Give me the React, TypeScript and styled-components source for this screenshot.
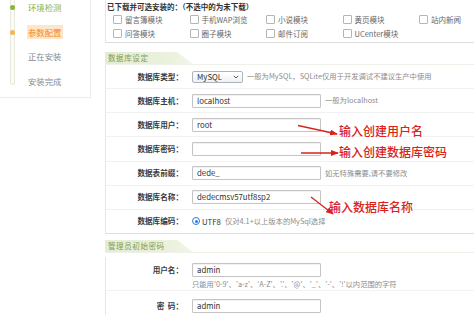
import React from 'react'
import styled, { createGlobalStyle } from 'styled-components'

const GlobalStyle = createGlobalStyle`
  html, body {
    margin: 0;
    padding: 0;
    background: #fff;
  }
  body {
    font-family: 'Noto Sans CJK SC', 'Noto Sans', sans-serif;
    color: #333;
  }
`

const Page = styled.div`
  position: relative;
  display: flex;
  align-items: flex-start;
  width: 474px;
  height: 315px;
  overflow: hidden;
`

const Sidebar = styled.div`
  position: relative;
  flex: 0 0 91px;
  height: 98px;
  border-right: 1px solid #ececec;
  border-bottom: 1px solid #ececec;
  box-sizing: border-box;
`

const Track = styled.div`
  position: absolute;
  left: 10px;
  top: 0;
  width: 3px;
  height: 84px;
  border: 1px solid #e6ebdd;
  border-top: none;
  border-radius: 0 0 3px 3px;
  background: #fbfcf8;
`

const Steps = styled.ul`
  list-style: none;
  margin: -5px 0 0;
  padding: 0;
`

const Step = styled.li<{ $state: 'done' | 'active' | 'todo' }>`
  position: relative;
  height: 24.5px;
  line-height: 24.5px;
  padding-left: 27px;
  font-size: 8.4px;
  color: ${(p) => (p.$state === 'done' ? '#8db33f' : p.$state === 'active' ? '#f28b1e' : '#8a8a8a')};

  span {
    padding: 1px 1px;
    background: ${(p) => (p.$state === 'active' ? '#fde6c9' : 'transparent')};
  }

  &::before {
    content: '';
    display: ${(p) => (p.$state === 'todo' ? 'none' : 'block')};
    position: absolute;
    left: 10px;
    top: 10px;
    width: 5px;
    height: 5px;
    border-radius: 50%;
    background: ${(p) => (p.$state === 'done' ? '#8db33f' : '#f6b552')};
  }
`

const Main = styled.div`
  flex: 0 0 390px;
  margin-left: 14px;
`

const TopBox = styled.div`
  height: 43px;
  box-sizing: border-box;
  border-left: 1px solid #e6e6e6;
  border-bottom: 1px solid #dedede;
`

const TopTitle = styled.div`
  height: 12px;
  line-height: 13px;
  padding-left: 1px;
  font-size: 7.5px;
  font-weight: 700;
  color: #333;
`

const ModuleGrid = styled.div`
  display: grid;
  grid-template-columns: repeat(5, 76.5px);
  grid-auto-rows: 14px;
  padding: 0 0 0 7px;
`

const Module = styled.label`
  display: flex;
  align-items: center;
  font-size: 7.5px;
  color: #666;
  white-space: nowrap;
`

const Box = styled.span`
  width: 7px;
  height: 7px;
  margin-right: 3px;
  border: 1px solid #b5b5b5;
  border-radius: 1px;
  background: #fff;
`

const SectionHead = styled.div<{ $top: number }>`
  margin-top: ${(p) => p.$top}px;
  height: 12px;
  border-bottom: 1px solid #eef1e8;
`

const Tab = styled.div`
  width: 88px;
  height: 12px;
  line-height: 12px;
  padding-left: 3px;
  box-sizing: border-box;
  font-size: 7.5px;
  letter-spacing: 0.6px;
  color: #7f9a55;
  background: linear-gradient(90deg, #e4edd2 0%, #eaf1dc 70%, #f1f5e8 100%);
  clip-path: polygon(0 0, 82% 0, 100% 100%, 0 100%);
`

const FormBox = styled.div<{ $gap: number }>`
  margin-top: ${(p) => p.$gap}px;
  border-left: 1px solid #e6e6e6;
  border-bottom: 1px solid #dedede;
`

const Row = styled.div<{ $h: number; $pad?: number; $last?: boolean }>`
  display: grid;
  grid-template-columns: 77px 1fr;
  column-gap: 9px;
  align-items: ${(p) => (p.$pad === undefined ? 'center' : 'start')};
  height: ${(p) => p.$h}px;
  padding-top: ${(p) => p.$pad ?? 0}px;
  box-sizing: border-box;
  border-bottom: ${(p) => (p.$last ? 'none' : '1px solid #f2f2f2')};
`

const Label = styled.div`
  height: 14px;
  line-height: 14px;
  text-align: right;
  font-size: 7.6px;
  font-weight: 700;
  color: #3a3a3a;
  white-space: pre;
`

const Field = styled.div`
  display: flex;
  align-items: center;
`

const Stack = styled.div`
  display: flex;
  flex-direction: column;
  gap: 2px;
`

const Input = styled.div`
  width: 129px;
  height: 14px;
  box-sizing: border-box;
  padding-left: 4px;
  line-height: 12px;
  font-size: 7.8px;
  color: #333;
  border: 1px solid #c4c4c4;
  border-radius: 1px;
  box-shadow: inset 0 1px 1px rgba(0, 0, 0, 0.06);
  background: #fff;
`

const Select = styled.div`
  display: flex;
  align-items: center;
  justify-content: space-between;
  width: 51px;
  height: 12px;
  box-sizing: border-box;
  padding: 0 3px 0 4px;
  font-size: 7.8px;
  color: #333;
  border: 1px solid #aeb4bf;
  border-radius: 2px;
  background: linear-gradient(#fff, #eef0f3);
`

const Hint = styled.span<{ $below?: boolean }>`
  margin-left: ${(p) => (p.$below ? 0 : 4)}px;
  font-size: 7.3px;
  line-height: 11px;
  color: #8c8c8c;
  white-space: nowrap;
`

const Radio = styled.span`
  width: 8px;
  height: 8px;
  box-sizing: border-box;
  border: 1.5px solid #2b7bd6;
  border-radius: 50%;
  margin-right: 2px;
  display: flex;
  align-items: center;
  justify-content: center;

  &::after {
    content: '';
    width: 3px;
    height: 3px;
    border-radius: 50%;
    background: #2b7bd6;
  }
`

const Strong = styled.span`
  font-size: 7.8px;
  color: #333;
`

const Note = styled.div<{ $x: number; $y: number }>`
  position: absolute;
  left: ${(p) => p.$x}px;
  top: ${(p) => p.$y}px;
  font-size: 12px;
  line-height: 14px;
  font-weight: 500;
  color: #d8231b;
  white-space: nowrap;
`

const Arrows = styled.svg`
  position: absolute;
  left: 0;
  top: 0;
  pointer-events: none;
`

const modules = ['留言簿模块', '手机WAP浏览', '小说模块', '黄页模块', '站内新闻', '问答模块', '圈子模块', '邮件订阅', 'UCenter模块']

const dbRows = [
  { label: '数据库主机：', value: 'localhost', hint: '一般为localhost' },
  { label: '数据库用户：', value: 'root' },
  { label: '数据库密码：', value: '' },
  { label: '数据表前缀：', value: 'dede_', hint: '如无特殊需要,请不要修改' },
  { label: '数据库名称：', value: 'dedecmsv57utf8sp2' },
]

export default function App() {
  return (
    <Page>
      <GlobalStyle />
      <Sidebar>
        <Track />
        <Steps>
          <Step $state="done"><span>环境检测</span></Step>
          <Step $state="active"><span>参数配置</span></Step>
          <Step $state="todo"><span>正在安装</span></Step>
          <Step $state="todo"><span>安装完成</span></Step>
        </Steps>
      </Sidebar>

      <Main>
        <TopBox>
          <TopTitle>已下载并可选安装的：（不选中的为未下载）</TopTitle>
          <ModuleGrid>
            {modules.map((m) => (
              <Module key={m}>
                <Box />
                {m}
              </Module>
            ))}
          </ModuleGrid>
        </TopBox>

        <SectionHead $top={9}>
          <Tab>数据库设定</Tab>
        </SectionHead>
        <FormBox $gap={0}>
          <Row $h={24}>
            <Label>数据库类型：</Label>
            <Field>
              <Select>
                MySQL
                <svg width="6" height="4" viewBox="0 0 6 4">
                  <path d="M0.8 0.8 L3 3 L5.2 0.8" fill="none" stroke="#555" strokeWidth="1" />
                </svg>
              </Select>
              <Hint>一般为MySQL，SQLite仅用于开发调试不建议生产中使用</Hint>
            </Field>
          </Row>
          {dbRows.map((r) => (
            <Row key={r.label} $h={24.2}>
              <Label>{r.label}</Label>
              <Field>
                <Input>{r.value}</Input>
                {r.hint && <Hint>{r.hint}</Hint>}
              </Field>
            </Row>
          ))}
          <Row $h={23} $last>
            <Label>数据库编码：</Label>
            <Field>
              <Radio />
              <Strong>UTF8</Strong>
              <Hint>仅对4.1+以上版本的MySql选择</Hint>
            </Field>
          </Row>
        </FormBox>

        <SectionHead $top={6}>
          <Tab>管理员初始密码</Tab>
        </SectionHead>
        <FormBox $gap={4}>
          <Row $h={34} $pad={6}>
            <Label>用户名：</Label>
            <Stack>
              <Input>admin</Input>
              <Hint $below>只能用'0-9'、'a-z'、'A-Z'、'.'、'@'、'_'、'-'、'!'以内范围的字符</Hint>
            </Stack>
          </Row>
          <Row $h={26} $pad={8} $last>
            <Label>密  码：</Label>
            <Field>
              <Input>admin</Input>
            </Field>
          </Row>
        </FormBox>
      </Main>

      <Arrows width="474" height="315" viewBox="0 0 474 315">
        <defs>
          <marker id="head" markerWidth="8" markerHeight="6" refX="1" refY="3" orient="auto" markerUnits="userSpaceOnUse">
            <path d="M8 0 L0 3 L8 6 Z" fill="#d8231b" />
          </marker>
        </defs>
        <line x1="337" y1="134" x2="298" y2="125.5" stroke="#d8231b" strokeWidth="1.3" markerStart="url(#head)" />
        <line x1="338" y1="153" x2="301" y2="153" stroke="#d8231b" strokeWidth="1.3" markerStart="url(#head)" />
        <line x1="333" y1="214" x2="311" y2="197" stroke="#d8231b" strokeWidth="1.3" markerStart="url(#head)" />
      </Arrows>
      <Note $x={339} $y={124}>输入创建用户名</Note>
      <Note $x={339} $y={145}>输入创建数据库密码</Note>
      <Note $x={329} $y={200}>输入数据库名称</Note>
    </Page>
  )
}
